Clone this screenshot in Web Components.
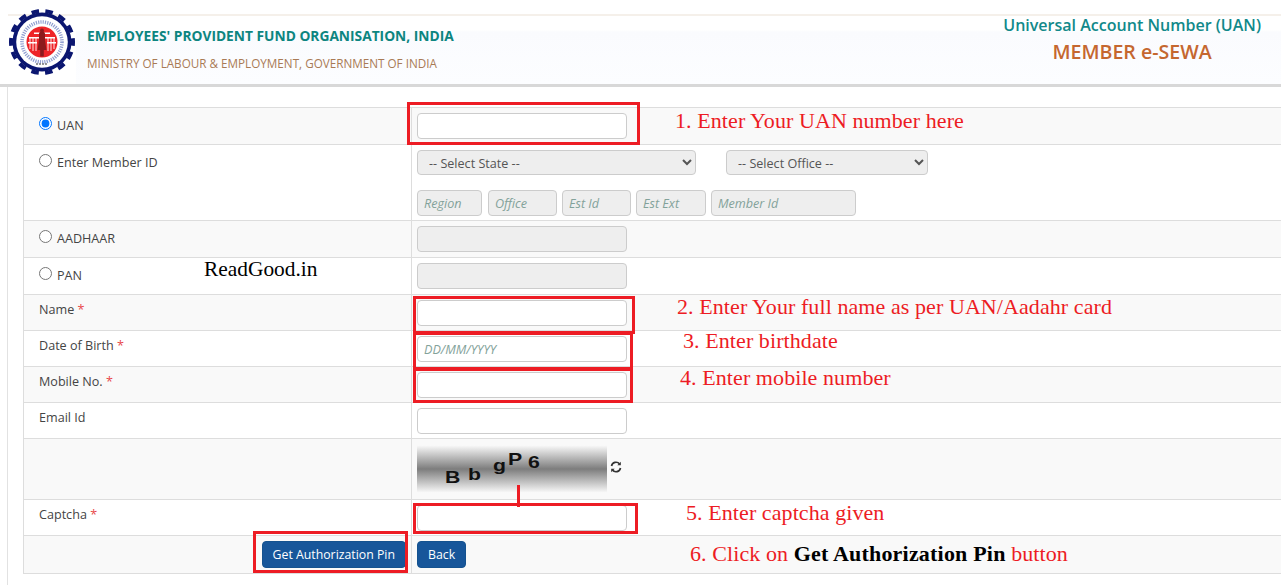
<!DOCTYPE html>
<html>
<head>
<meta charset="utf-8">
<title>Member e-Sewa</title>
<style>
  html, body { margin: 0; height: 585px; overflow: hidden; background: #fff; }
  body { position: relative; font-family: "Open Sans", "Liberation Sans", sans-serif; }
</style>
</head>
<body>
<epf-header></epf-header>

<form-table>
  <form-row h="37"><label-radio checked>UAN</label-radio><field-input w="210"></field-input></form-row>
  <form-row h="76" plain>
    <label-radio>Enter Member ID</label-radio>
    <member-id-fields></member-id-fields>
  </form-row>
  <form-row h="37"><label-radio>AADHAAR</label-radio><field-input w="210" disabled></field-input></form-row>
  <form-row h="37" plain><label-radio>PAN</label-radio><field-input w="210" disabled></field-input></form-row>
  <form-row h="36"><field-label required>Name</field-label><field-input w="210"></field-input></form-row>
  <form-row h="36" plain><field-label required>Date of Birth</field-label><field-input w="210" placeholder="DD/MM/YYYY"></field-input></form-row>
  <form-row h="36"><field-label required>Mobile No.</field-label><field-input w="210"></field-input></form-row>
  <form-row h="36" plain><field-label>Email Id</field-label><field-input w="210"></field-input></form-row>
  <form-row h="61"><span></span><captcha-image></captcha-image></form-row>
  <form-row h="36" plain><field-label required>Captcha</field-label><field-input w="210"></field-input></form-row>
  <form-row h="39" last><action-button align="end">Get Authorization Pin</action-button><action-button>Back</action-button></form-row>
</form-table>

<note-box x="407" y="102" w="233" h="43"></note-box>
<note-box x="413" y="296" w="222" h="38"></note-box>
<note-box x="413" y="332" w="220" h="38"></note-box>
<note-box x="413" y="368" w="220" h="35"></note-box>
<note-box x="413" y="503" w="225" h="31"></note-box>
<note-box x="517" y="485" w="3" h="22"></note-box>
<note-box x="253" y="531" w="155" h="42"></note-box>

<note-text x="675" y="109">1. Enter Your UAN number here</note-text>
<note-text x="204" y="257" black>ReadGood.in</note-text>
<note-text x="677" y="295">2. Enter Your full name as per UAN/Aadahr card</note-text>
<note-text x="683" y="329">3. Enter birthdate</note-text>
<note-text x="680" y="366">4. Enter mobile number</note-text>
<note-text x="686" y="501">5. Enter captcha given</note-text>
<note-text x="690" y="542">6. Click on <b>Get Authorization Pin</b> button</note-text>

<script>
// Page header with logo and titles
class EpfHeader extends HTMLElement {
  constructor() {
    super();
    this.attachShadow({ mode: 'open' });
  }

  connectedCallback() {
    this.shadowRoot.innerHTML = `
      <style>
        :host {
          display: flex;
          justify-content: space-between;
          box-sizing: border-box;
          height: 87px;
          padding: 9px 20px 0 9px;
          border-bottom: 3px solid #d8d8d8;
          background:
            linear-gradient(#f5f0ea, #f5f0ea) 8px 14px / 100% 2px no-repeat,
            linear-gradient(90deg, #fff 76px, transparent 76px),
            linear-gradient(#fff 30px, #fafbfe 32px, #fcfdff 100%);
        }
        .brand { display: flex; gap: 12px; }
        .titles { padding-top: 17px; }
        .org { font-size: 13.75px; font-weight: 700; line-height: 20px; color: #0d8580; white-space: nowrap; }
        .min { font-size: 11.7px; line-height: 18px; margin-top: 8px; color: #a97a55; white-space: nowrap; }
        .right { text-align: center; padding-top: 5px; }
        .uan { font-size: 16.05px; font-weight: 600; line-height: 22px; color: #11898a; }
        .sewa { font-size: 19.6px; font-weight: 600; line-height: 28px; margin-top: 2px; color: #c5672f; }
      </style>
      <div class="brand">
        <epf-logo></epf-logo>
        <div class="titles">
          <div class="org">EMPLOYEES' PROVIDENT FUND ORGANISATION, INDIA</div>
          <div class="min">MINISTRY OF LABOUR &amp; EMPLOYMENT, GOVERNMENT OF INDIA</div>
        </div>
      </div>
      <div class="right">
        <div class="uan">Universal Account Number (UAN)</div>
        <div class="sewa">MEMBER e-SEWA</div>
      </div>
    `;
  }
}

// Gear seal
class EpfLogo extends HTMLElement {
  constructor() {
    super();
    this.attachShadow({ mode: 'open' });
  }

  connectedCallback() {
    this.shadowRoot.innerHTML = `
      <style>
        :host { display: block; width: 66px; height: 66px; }
        svg { display: block; }
      </style>
      <svg width="66" height="66" viewBox="0 0 66 66">
        <circle cx="33" cy="33" r="29.500" fill="#0b1670"/>
        <circle cx="33" cy="33" r="31" fill="none" stroke="#0b1670" stroke-width="4" stroke-dasharray="7.6 6.31" transform="rotate(-7 33 33)"/>
        <circle cx="33" cy="33" r="25.800" fill="#fff"/>
        <circle cx="33" cy="33" r="20" fill="none" stroke="#6c7fc0" stroke-width="3.6" stroke-dasharray="1.2 1.1" opacity=".75"/>
        <path d="M27 55h12" stroke="#777" stroke-width="1.4" stroke-dasharray="2 1"/>
        <circle cx="33" cy="33" r="15.500" fill="#ee2428"/>
        <path d="M20 28h26v1.600H20zM19 33h9v1.400h-9zM38 33h9v1.400h-9zM25 23.500h16v1.500H25z" fill="#fff"/>
        <path d="M21 29v11M24 29v13M27 29v13M39 29v13M42 29v13M45 29v11" stroke="#fff" stroke-width=".9"/>
        <path d="M30 25a2.500 2.500 0 0 1 2.500-2.500h1A2.500 2.500 0 0 1 36 25v6l1.500 10h-2.700v6.500h-3.600V41h-2.700L30 31z" fill="#8c1a1d"/>
        <circle cx="33" cy="21.500" r="2" fill="#8c1a1d"/>
      </svg>
    `;
  }
}

// Table frame
class FormTable extends HTMLElement {
  constructor() {
    super();
    this.attachShadow({ mode: 'open' });
  }

  connectedCallback() {
    this.shadowRoot.innerHTML = `
      <style>
        :host {
          display: block;
          box-sizing: border-box;
          height: 498px;
          margin-left: 7px;
          padding: 20px 0 0 15px;
          border-left: 1px solid #e2e2e2;
          font-size: 12.6px;
          color: #444;
        }
      </style>
      <slot></slot>
    `;
  }
}

// One row: label column and value column
class FormRow extends HTMLElement {
  constructor() {
    super();
    this.attachShadow({ mode: 'open' });
  }

  connectedCallback() {
    const h = this.getAttribute('h');
    const bg = this.hasAttribute('plain') ? '#fff' : '#f9f9f9';
    const bottom = this.hasAttribute('last') ? 'border-bottom: 1px solid #ddd;' : '';
    this.shadowRoot.innerHTML = `
      <style>
        :host {
          display: grid;
          grid-template-columns: 387px 1fr;
          box-sizing: border-box;
          height: ${h}px;
          border-top: 1px solid #ddd;
          border-left: 1px solid #ddd;
          background: ${bg};
          ${bottom}
        }
        .value {
          display: block;
          border-left: 1px solid #ddd;
          padding: 5px 0 0 5px;
          min-width: 0;
        }
      </style>
      <slot name="first"></slot>
      <div class="value"><slot></slot></div>
    `;
    // first child goes in the label column
    this.firstElementChild.slot = 'first';
  }
}

class LabelRadio extends HTMLElement {
  constructor() {
    super();
    this.attachShadow({ mode: 'open' });
  }

  connectedCallback() {
    const checked = this.hasAttribute('checked') ? 'checked' : '';
    this.shadowRoot.innerHTML = `
      <style>
        :host { display: block; padding: 8px 0 0 15px; line-height: 20px; }
        label { display: flex; align-items: flex-start; gap: 5px; }
        input { margin: 1px 0 0; width: 13px; height: 13px; }
      </style>
      <label><input type="radio" name="kind" ${checked}><span><slot></slot></span></label>
    `;
  }
}

class FieldLabel extends HTMLElement {
  constructor() {
    super();
    this.attachShadow({ mode: 'open' });
  }

  connectedCallback() {
    const star = this.hasAttribute('required') ? ' <span>*</span>' : '';
    this.shadowRoot.innerHTML = `
      <style>
        :host { display: block; padding: 5px 0 0 15px; line-height: 20px; }
        span { color: #e8484b; }
      </style>
      <slot></slot>${star}
    `;
  }
}

class FieldInput extends HTMLElement {
  constructor() {
    super();
    this.attachShadow({ mode: 'open' });
  }

  connectedCallback() {
    const w = this.getAttribute('w');
    const ph = this.getAttribute('placeholder') || '';
    const off = this.hasAttribute('disabled');
    this.shadowRoot.innerHTML = `
      <style>
        :host { display: inline-block; vertical-align: top; }
        input {
          display: block;
          box-sizing: border-box;
          width: ${w}px;
          height: 26px;
          padding: 0 6px;
          border: 1px solid #ccc;
          border-radius: 4px;
          background: ${off ? '#eee' : '#fff'};
          font: 12.6px "Open Sans", "Liberation Sans", sans-serif;
          color: #555;
        }
        input::placeholder { color: #83a29a; font-style: italic; opacity: 1; }
      </style>
      <input placeholder="${ph}">
    `;
  }
}

class FieldSelect extends HTMLElement {
  constructor() {
    super();
    this.attachShadow({ mode: 'open' });
  }

  connectedCallback() {
    const w = this.getAttribute('w');
    this.shadowRoot.innerHTML = `
      <style>
        :host { display: block; }
        select {
          display: block;
          box-sizing: border-box;
          width: ${w}px;
          height: 25px;
          padding: 1px 5px 0 7px;
          border: 1px solid #ccc;
          border-radius: 4px;
          background-color: #eee;
          font: 12.6px "Open Sans", "Liberation Sans", sans-serif;
          color: #555;
        }
      </style>
      <select><option>${this.textContent}</option></select>
    `;
  }
}

// Selects and id parts of the member id row
class MemberIdFields extends HTMLElement {
  constructor() {
    super();
    this.attachShadow({ mode: 'open' });
  }

  connectedCallback() {
    this.shadowRoot.innerHTML = `
      <style>
        :host { display: flex; flex-direction: column; gap: 15px; }
        .line { display: flex; }
        .selects { gap: 30px; }
        .parts { gap: 5px; }
        .parts :first-child { margin-right: 1px; }
      </style>
      <div class="line selects">
        <field-select w="279">-- Select State --</field-select>
        <field-select w="202">-- Select Office --</field-select>
      </div>
      <div class="line parts">
        <field-input w="65" disabled placeholder="Region"></field-input>
        <field-input w="69" disabled placeholder="Office"></field-input>
        <field-input w="69" disabled placeholder="Est Id"></field-input>
        <field-input w="70" disabled placeholder="Est Ext"></field-input>
        <field-input w="145" disabled placeholder="Member Id"></field-input>
      </div>
    `;
  }
}

class CaptchaImage extends HTMLElement {
  constructor() {
    super();
    this.attachShadow({ mode: 'open' });
  }

  connectedCallback() {
    this.shadowRoot.innerHTML = `
      <style>
        :host { display: flex; align-items: center; gap: 3px; margin-top: 1px; }
        .img {
          position: relative;
          width: 190px;
          height: 48px;
          background: linear-gradient(#fbfbfb, #7d7d7d 50%, #fbfbfb);
          font: bold 17px "Liberation Sans", sans-serif;
          color: #111;
        }
        .img span { position: absolute; line-height: 18px; transform: scaleX(1.25); transform-origin: left; }
        svg { display: block; margin-bottom: 4px; }
      </style>
      <div class="img">
        <span style="left:28px;top:24px">B</span>
        <span style="left:51px;top:21px">b</span>
        <span style="left:76px;top:12px">g</span>
        <span style="left:91px;top:6px">P</span>
        <span style="left:111px;top:9px">6</span>
      </div>
      <svg width="12" height="12" viewBox="0 0 12 12" fill="none" stroke="#333" stroke-width="1.700">
        <path d="M1.500 5A4.600 4.600 0 0 1 9.600 3"/>
        <path d="M10.500 7A4.600 4.600 0 0 1 2.400 9"/>
        <path d="M10.800.8v3.500H7.300z" fill="#333" stroke="none"/>
        <path d="M1.200 11.200V7.700h3.500z" fill="#333" stroke="none"/>
      </svg>
    `;
  }
}

class ActionButton extends HTMLElement {
  constructor() {
    super();
    this.attachShadow({ mode: 'open' });
  }

  connectedCallback() {
    const end = this.getAttribute('align') === 'end';
    this.shadowRoot.innerHTML = `
      <style>
        :host {
          display: flex;
          justify-content: ${end ? 'flex-end' : 'flex-start'};
          padding-right: ${end ? '5px' : '0'};
          padding-top: ${end ? '5px' : '0'};
        }
        button {
          height: 27px;
          padding: 0 10px;
          border: 1px solid #14528f;
          border-radius: 4px;
          background: #17569a;
          color: #fff;
          font: 12.3px "Open Sans", "Liberation Sans", sans-serif;
        }
      </style>
      <button><slot></slot></button>
    `;
  }
}

// Red marks drawn over the form
class NoteBox extends HTMLElement {
  constructor() {
    super();
    this.attachShadow({ mode: 'open' });
  }

  connectedCallback() {
    const a = n => this.getAttribute(n);
    const solid = Number(a('w')) < 6;
    this.shadowRoot.innerHTML = `
      <style>
        :host {
          position: absolute;
          left: ${a('x')}px;
          top: ${a('y')}px;
          width: ${a('w')}px;
          height: ${a('h')}px;
          box-sizing: border-box;
          ${solid ? 'background: #ed1c24;' : 'border: 3px solid #ed1c24;'}
        }
      </style>
    `;
  }
}

class NoteText extends HTMLElement {
  constructor() {
    super();
    this.attachShadow({ mode: 'open' });
  }

  connectedCallback() {
    const black = this.hasAttribute('black');
    this.shadowRoot.innerHTML = `
      <style>
        :host {
          position: absolute;
          left: ${this.getAttribute('x')}px;
          top: ${this.getAttribute('y')}px;
          font: ${black ? '21.4px' : '22px'}/24px "Liberation Serif", serif;
          letter-spacing: ${black ? '0' : '.08px'};
          white-space: nowrap;
          color: ${black ? '#000' : '#ed1c24'};
        }
        ::slotted(b) { color: #000; letter-spacing: .2px; }
      </style>
      <slot></slot>
    `;
  }
}

customElements.define('epf-logo', EpfLogo);
customElements.define('epf-header', EpfHeader);
customElements.define('form-table', FormTable);
customElements.define('form-row', FormRow);
customElements.define('label-radio', LabelRadio);
customElements.define('field-label', FieldLabel);
customElements.define('field-input', FieldInput);
customElements.define('field-select', FieldSelect);
customElements.define('member-id-fields', MemberIdFields);
customElements.define('captcha-image', CaptchaImage);
customElements.define('action-button', ActionButton);
customElements.define('note-box', NoteBox);
customElements.define('note-text', NoteText);
</script>
</body>
</html>
